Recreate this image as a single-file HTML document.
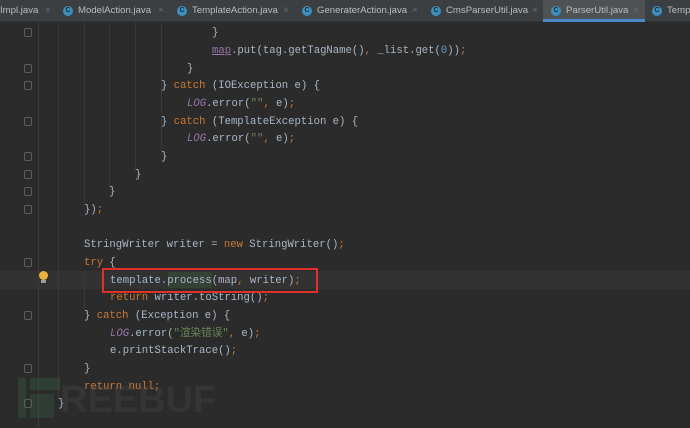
<!DOCTYPE html>
<html><head><meta charset="utf-8"><style>
*{margin:0;padding:0;box-sizing:border-box}
body{width:690px;height:427px;overflow:hidden;background:#2b2b2b;position:relative;font-family:"Liberation Sans",sans-serif}
.tabs{position:absolute;left:0;top:0;width:690px;height:22px;background:#3c3f41;border-bottom:1px solid #323232}
.t{position:absolute;top:0;height:22px;line-height:22px;font-size:9.6px;color:#bbbbbb;white-space:nowrap}
.ic{position:absolute;top:6px;width:10px;height:10px;border-radius:50%;background:#3d8fc2;color:#2b2b2b;font-size:7px;line-height:10px;text-align:center;font-weight:bold}
.x{position:absolute;top:0;line-height:22px;font-size:10px;color:#6b6e70}
.act{position:absolute;left:543px;top:0;width:102px;height:22px;background:#4e5254}
.ul{position:absolute;left:543px;top:19px;width:102px;height:3px;background:#4a88c7}
.gut{position:absolute;left:38px;top:22px;width:1px;height:405px;background:#3a3a3a}
.g{position:absolute;width:1px;background:#393939}
.c{position:absolute;left:0;top:1px;width:690px;height:427px}
.l{position:absolute;font-family:"Liberation Mono","Noto Sans CJK SC",monospace;font-size:10.6px;color:#a9b7c6;white-space:pre;line-height:17px;height:17px}
.k{color:#cc7832}.p{color:#9876aa;font-style:italic}.s{color:#6a8759}.n{color:#6897bb}
.f{position:absolute;left:24px;width:8px;height:9px;border:1px solid #5a5d5f;border-radius:2px;background:#2b2b2b}
</style></head><body>
<div class="tabs">
<div class="act"></div><div class="ul"></div>
<div class="t" style="left:0">Impl.java</div><div class="x" style="left:45px">×</div>
<div class="ic" style="left:63px">C</div><div class="t" style="left:78px">ModelAction.java</div><div class="x" style="left:158px">×</div>
<div class="ic" style="left:177px">C</div><div class="t" style="left:192px">TemplateAction.java</div><div class="x" style="left:283px">×</div>
<div class="ic" style="left:302px">C</div><div class="t" style="left:317px">GeneraterAction.java</div><div class="x" style="left:412px">×</div>
<div class="ic" style="left:431px">C</div><div class="t" style="left:446px">CmsParserUtil.java</div><div class="x" style="left:532px">×</div>
<div class="ic" style="left:551px">C</div><div class="t" style="left:566px">ParserUtil.java</div><div class="x" style="left:633px">×</div>
<div class="ic" style="left:652px">C</div><div class="t" style="left:667px">Temp</div>
</div>
<div style="position:absolute;left:0;top:271px;width:690px;height:18px;background:#323232"></div>
<div style="position:absolute;left:168px;top:272px;width:44px;height:16px;background:#344134"></div>
<div class="gut"></div>
<div class="g" style="left:58px;top:22px;height:377px"></div>
<div class="g" style="left:84px;top:22px;height:180px"></div>
<div class="g" style="left:109px;top:22px;height:165px"></div>
<div class="g" style="left:135px;top:22px;height:148px"></div>
<div class="g" style="left:161px;top:22px;height:132px"></div>
<div class="g" style="left:84px;top:270px;height:40px"></div>
<div class="f" style="top:28px"></div><div class="f" style="top:64px"></div><div class="f" style="top:81px"></div>
<div class="f" style="top:117px"></div><div class="f" style="top:152px"></div><div class="f" style="top:170px"></div>
<div class="f" style="top:187px"></div><div class="f" style="top:205px"></div><div class="f" style="top:258px"></div>
<div class="f" style="top:311px"></div><div class="f" style="top:364px"></div><div class="f" style="top:399px"></div>
<div style="position:absolute;left:39px;top:271px;width:9px;height:9px;border-radius:50%;background:#e8b33c"></div>
<div style="position:absolute;left:41px;top:280px;width:5px;height:3px;background:#9a9a9a"></div>
<div class="c">
<div class="l" style="left:212px;top:24px">}</div>
<div class="l" style="left:212px;top:42px"><span style="color:#9876aa;text-decoration:underline">map</span>.put(tag.getTagName()<span class="k">,</span> _list.get(<span class="n">0</span>))<span class="k">;</span></div>
<div class="l" style="left:187px;top:60px">}</div>
<div class="l" style="left:161px;top:77px">} <span class="k">catch</span> (IOException e) {</div>
<div class="l" style="left:187px;top:95px"><span class="p">LOG</span>.error(<span class="s">""</span><span class="k">,</span> e)<span class="k">;</span></div>
<div class="l" style="left:161px;top:113px">} <span class="k">catch</span> (TemplateException e) {</div>
<div class="l" style="left:187px;top:130px"><span class="p">LOG</span>.error(<span class="s">""</span><span class="k">,</span> e)<span class="k">;</span></div>
<div class="l" style="left:161px;top:148px">}</div>
<div class="l" style="left:135px;top:166px">}</div>
<div class="l" style="left:109px;top:183px">}</div>
<div class="l" style="left:84px;top:201px">})<span class="k">;</span></div>
<div class="l" style="left:84px;top:236px">StringWriter writer = <span class="k">new</span> StringWriter()<span class="k">;</span></div>
<div class="l" style="left:84px;top:254px"><span class="k">try</span> {</div>
<div class="l" style="left:110px;top:272px">template.process(map<span class="k">,</span> writer)<span class="k">;</span></div>
<div class="l" style="left:110px;top:289px"><span class="k">return</span> writer.toString()<span class="k">;</span></div>
<div class="l" style="left:84px;top:307px">} <span class="k">catch</span> (Exception e) {</div>
<div class="l" style="left:110px;top:325px"><span class="p">LOG</span>.error(<span class="s">"渲染错误"</span><span class="k">,</span> e)<span class="k">;</span></div>
<div class="l" style="left:110px;top:342px">e.printStackTrace()<span class="k">;</span></div>
<div class="l" style="left:84px;top:360px">}</div>
<div class="l" style="left:84px;top:378px"><span class="k">return null;</span></div>
<div class="l" style="left:58px;top:395px">}</div>
</div>
<div style="position:absolute;left:102px;top:268px;width:216px;height:25px;border:2px solid #e0302a"></div>
<div style="position:absolute;left:18px;top:378px;width:8px;height:40px;background:rgba(60,110,80,0.3)"></div>
<div style="position:absolute;left:30px;top:378px;width:30px;height:12px;background:rgba(60,110,80,0.3)"></div>
<div style="position:absolute;left:30px;top:394px;width:24px;height:24px;background:rgba(60,110,80,0.25)"></div>
<div style="position:absolute;left:60px;top:380px;font:bold 38px/40px 'Liberation Sans',sans-serif;color:rgba(90,90,90,0.22);letter-spacing:0px">REEBUF</div>
</body></html>
